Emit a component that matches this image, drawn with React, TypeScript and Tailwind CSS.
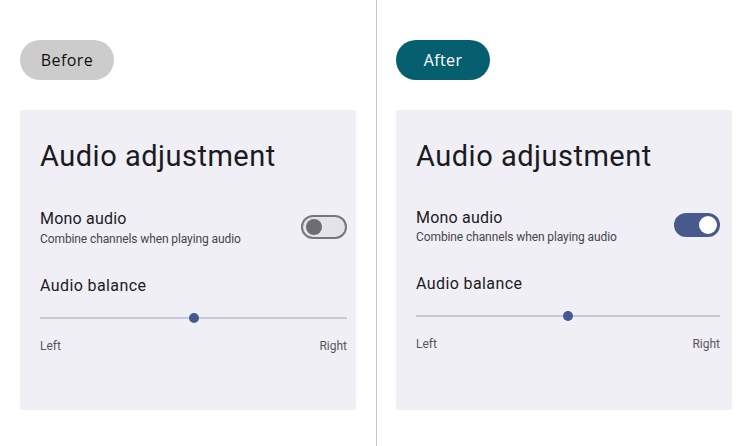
import React from 'react';

interface PanelProps {
  label: string;
  after?: boolean;
}

const Toggle: React.FC<{ on: boolean }> = ({ on }) =>
  on ? (
    <div className="w-[46px] h-[24px] rounded-full bg-[#485a8c] flex items-center justify-end pr-[3px]">
      <div className="w-[18px] h-[18px] rounded-full bg-white" />
    </div>
  ) : (
    <div className="w-[46px] h-[24px] rounded-full bg-[#e4e3e9] border-2 border-[#76767c] flex items-center pl-[3px]">
      <div className="w-[16px] h-[16px] rounded-full bg-[#6d6d72]" />
    </div>
  );

const Panel: React.FC<PanelProps> = ({ label, after }) => (
  <div className="flex flex-col">
    <div
      className={`w-[94px] h-[40px] rounded-full flex items-center justify-center text-[16px] font-medium tracking-[0.4px] ${
        after ? 'bg-[#055f6e] text-white' : 'bg-[#cccccc] text-[#111]'
      }`}
      style={{ fontFamily: '"Open Sans", sans-serif' }}
    >
      {label}
    </div>

    <div
      className={`mt-[30px] w-[336px] h-[300px] bg-[#f0eff5] pl-[20px] pt-[28px] flex flex-col ${
        after ? 'pr-[12px]' : 'pr-[9px]'
      }`}
      style={{ fontFamily: 'Roboto, "Noto Sans", sans-serif' }}
    >
      <h1 className="text-[29px] leading-[36px] tracking-[0.5px] text-[#1b1b1f]">Audio adjustment</h1>

      <div className={`flex items-center justify-between ${after ? 'mt-[31px]' : 'mt-[32px]'}`}>
        <div className="pt-[2px]">
          <p className="text-[16px] leading-[22px] tracking-[0.2px] text-[#1b1b1f]">Mono audio</p>
          <p className={`text-[12px] leading-[16px] tracking-[-0.1px] text-[#46464f] ${after ? 'mt-0' : 'mt-[1px]'}`}>
            Combine channels when playing audio
          </p>
        </div>
        <Toggle on={!!after} />
      </div>

      <p className="mt-[28px] text-[16px] leading-[22px] tracking-[0.4px] text-[#1b1b1f]">Audio balance</p>

      <div className="mt-[11px] h-[20px] relative flex items-center">
        <div className="w-full h-[2px] bg-[#c8c9d8]" />
        <div className="absolute left-1/2 -translate-x-1/2 w-[10px] h-[10px] rounded-full bg-[#455a91]" />
      </div>

      <div className="mt-[10px] flex justify-between text-[12px] leading-[16px] text-[#56565e]">
        <span>Left</span>
        <span>Right</span>
      </div>
    </div>
  </div>
);

export default function App() {
  return (
    <div className="w-[752px] h-[446px] bg-white flex">
      <div className="w-[376px] pl-[20px] pt-[40px]">
        <Panel label="Before" />
      </div>
      <div className="w-px h-full bg-[#c8c8c8]" />
      <div className="flex-1 pl-[19px] pt-[40px]">
        <Panel label="After" after />
      </div>
    </div>
  );
}
